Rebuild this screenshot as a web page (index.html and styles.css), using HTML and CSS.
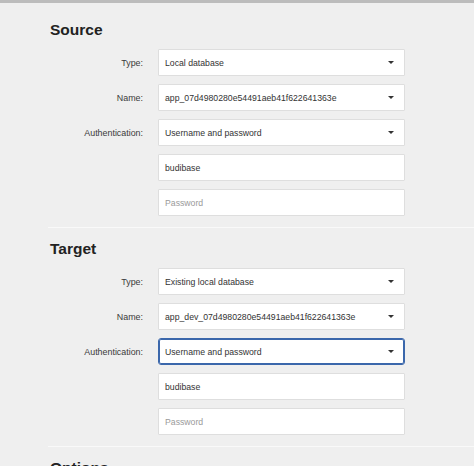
FILE: index.html
```html
<!DOCTYPE html>
<html lang="en">
<head>
<meta charset="utf-8">
<title>Replication</title>
<link rel="stylesheet" href="styles.css">
</head>
<body>
<div class="topbar"></div>
<main class="main">
  <section class="section first">
    <h2 class="heading">Source</h2>
    <div class="fields">
      <label class="label">Type:</label>
      <div class="select"><span class="value">Local database</span><span class="caret"></span></div>
      <label class="label">Name:</label>
      <div class="select"><span class="value">app_07d4980280e54491aeb41f622641363e</span><span class="caret"></span></div>
      <label class="label">Authentication:</label>
      <div class="select"><span class="value">Username and password</span><span class="caret"></span></div>
      <span class="spacer"></span>
      <input class="input" type="text" value="budibase">
      <span class="spacer"></span>
      <input class="input" type="password" placeholder="Password">
    </div>
  </section>
  <section class="section">
    <h2 class="heading">Target</h2>
    <div class="fields">
      <label class="label">Type:</label>
      <div class="select"><span class="value">Existing local database</span><span class="caret"></span></div>
      <label class="label">Name:</label>
      <div class="select"><span class="value">app_dev_07d4980280e54491aeb41f622641363e</span><span class="caret"></span></div>
      <label class="label">Authentication:</label>
      <div class="select focused"><span class="value">Username and password</span><span class="caret"></span></div>
      <span class="spacer"></span>
      <input class="input" type="text" value="budibase">
      <span class="spacer"></span>
      <input class="input" type="password" placeholder="Password">
    </div>
  </section>
  <section class="section">
    <h2 class="heading">Options</h2>
  </section>
</main>
</body>
</html>
```
FILE: styles.css
```css
html, body {
  margin: 0;
  padding: 0;
  height: 100%;
  overflow: hidden;
}
body {
  background: #efefef;
  font-family: "Liberation Sans", Arial, Helvetica, sans-serif;
  color: #333;
}
.topbar {
  height: 3px;
  background: #bcbcbc;
}
.main {
  padding-left: 48px;
}
.section {
  border-top: 1px solid #f9f9f9;
  padding: 12px 0 11px 2px;
}
.section.first {
  border-top-color: transparent;
  margin-top: 5px;
}
.heading {
  margin: 0 0 10px 0;
  font-size: 15.5px;
  line-height: 18px;
  font-weight: bold;
  color: #222;
}
.fields {
  display: grid;
  grid-template-columns: 93px 247px;
  column-gap: 15px;
  row-gap: 8px;
  grid-auto-rows: 27px;
}
.label {
  display: flex;
  align-items: center;
  justify-content: flex-end;
  font-size: 8.9px;
  color: #3a3a3a;
}
.select, .input {
  box-sizing: border-box;
  height: 27px;
  width: 247px;
  margin: 0;
  background: #fff;
  border: 1px solid #dedede;
  border-radius: 1px;
  font-family: "Liberation Sans", Arial, Helvetica, sans-serif;
  font-size: 8.7px;
  color: #333;
}
.select {
  display: flex;
  align-items: center;
  justify-content: space-between;
  padding: 0 10px 0 6px;
}
.select.focused {
  border-color: #3b67ab;
  box-shadow: inset 0 0 0 1px #3b67ab;
  border-radius: 3px;
}
.value {
  white-space: nowrap;
}
.caret {
  width: 0;
  height: 0;
  border-left: 3px solid transparent;
  border-right: 3px solid transparent;
  border-top: 3.5px solid #333;
}
.input {
  padding: 0 6px;
  outline: none;
}
.input::placeholder {
  color: #9a9a9a;
}
```
